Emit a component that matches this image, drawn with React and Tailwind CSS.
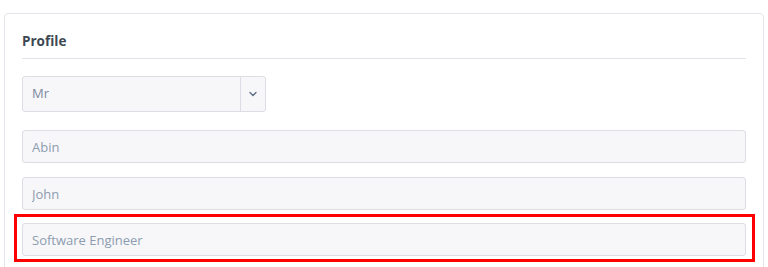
import React from 'react';

function Field({ value }) {
  return (
    <input
      readOnly
      placeholder={value}
      className="block w-full h-[33px] rounded-[3px] border border-[#dddde5] bg-[#f7f7f9] px-[9px] text-[13px] text-[#8a9ab0] placeholder:text-[#8d9cb0] outline-none"
    />
  );
}

export default function App() {
  return (
    <div className="h-[267px] bg-white pt-[13px] px-[4px] overflow-hidden" style={{ fontFamily: '"Open Sans", "Noto Sans", sans-serif' }}>
      <div className="rounded-[4px] border border-[#e4e4ea] bg-white px-[17px] pb-[20px]">
        {/* header */}
        <div className="pt-[18px] pb-[7px] border-b border-[#e2e2e8]">
          <h2 className="text-[13.5px] font-bold text-[#3d4852] leading-[19px]">Profile</h2>
        </div>

        {/* body */}
        <div className="pt-[17px]">
          <div className="flex w-[244px] h-[36px] rounded-[3px] border border-[#dddde5] bg-[#f7f7f9]">
            <div className="flex-1 flex items-center px-[9px] text-[13px] text-[#7a8aa0]">Mr</div>
            <div className="w-[25px] border-l border-[#dddde5] flex items-center justify-center">
              <svg width="8" height="6" viewBox="0 0 8 6" fill="none">
                <path d="M1 1.5L4 4.5L7 1.5" stroke="#5a6b82" strokeWidth="1.3" strokeLinecap="round" strokeLinejoin="round" />
              </svg>
            </div>
          </div>

          <div className="mt-[18px]">
            <Field value="Abin" />
          </div>
          <div className="mt-[14px]">
            <Field value="John" />
          </div>
          <div className="mt-[4px] -ml-[8px] -mr-[9px] border-[3px] border-[#ff0000] pt-[6px] pb-[3px] pl-[5px] pr-[6px]">
            <Field value="Software Engineer" />
          </div>
        </div>
      </div>
    </div>
  );
}
